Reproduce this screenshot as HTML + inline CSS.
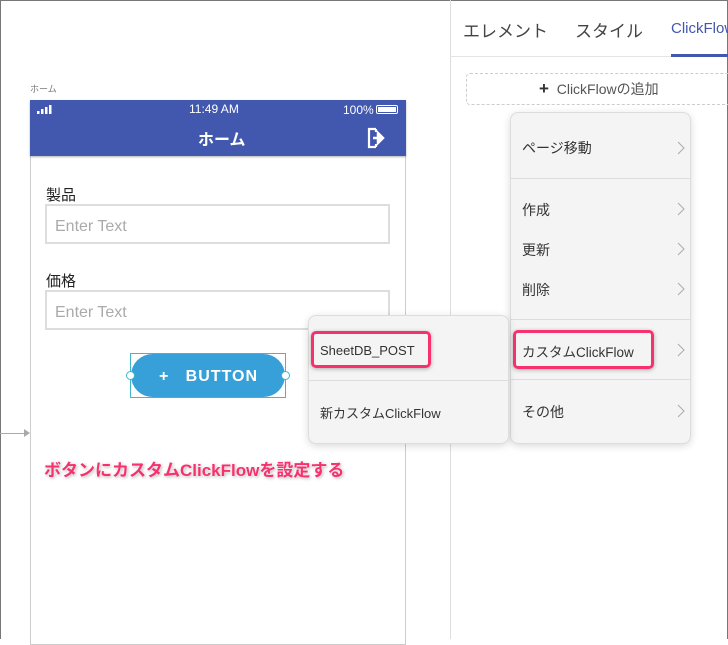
<!DOCTYPE html>
<html><head><meta charset="utf-8"><style>
*{box-sizing:border-box;margin:0;padding:0}
body{width:728px;height:639px;position:relative;overflow:hidden;background:#fff;font-family:"Liberation Sans","Noto Sans CJK JP",sans-serif;}
.a{position:absolute}
.t{position:absolute;white-space:nowrap}
.menu{position:absolute;background:#f4f4f4;border:1px solid #ddd;border-radius:8px;box-shadow:0 2px 8px rgba(0,0,0,.15)}
.sep{position:absolute;left:0;right:0;height:1px;background:#ddd}
.mi{position:absolute;font-size:14px;color:#333;white-space:nowrap}
.chev{position:absolute;width:8px;height:14px}
.pink{position:absolute;border:3px solid #f7306e;border-radius:5px;box-shadow:0 1px 4px rgba(0,0,0,.3)}
</style></head><body>
<div class="a" style="left:0;top:0;width:728px;height:639px;border:1px solid #777;border-bottom:none"></div>
<div class="a" style="left:450px;top:0;width:1px;height:639px;background:#ddd"></div>
<div class="a" style="left:450px;top:56px;width:278px;height:1px;background:#e4e4e4"></div>
<div class="t" style="left:463px;top:17px;font-size:17px;color:#444">エレメント</div>
<div class="t" style="left:575px;top:17px;font-size:17px;color:#444">スタイル</div>
<div class="t" style="left:671px;top:20px;font-size:15px;color:#4257ae">ClickFlow</div>
<div class="a" style="left:671px;top:54px;width:57px;height:3px;background:#4257ae"></div>
<div class="a" style="left:466px;top:73px;width:270px;height:32px;border:1px dashed #ccc;border-radius:4px"></div>
<div class="t" style="left:539px;top:79px;font-size:14px;color:#555"><b style="font-size:17px;color:#333">+</b>&nbsp; ClickFlowの追加</div>
<!-- phone -->
<div class="t" style="left:30px;top:82px;font-size:9px;color:#777">ホーム</div>
<div class="a" style="left:30px;top:100px;width:376px;height:545px;border:1px solid #ccc"></div>
<div class="a" style="left:30px;top:100px;width:376px;height:56px;background:#4257ae;box-shadow:0 1px 2px rgba(0,0,0,.3)"></div>
<svg class="a" style="left:37px;top:105px" width="16" height="9"><rect x="0" y="6" width="2.5" height="3" fill="#fff"/><rect x="4" y="4" width="2.5" height="5" fill="#fff"/><rect x="8" y="2" width="2.5" height="7" fill="#fff"/><rect x="12" y="0" width="2.5" height="9" fill="#fff"/></svg>
<div class="t" style="left:189px;top:102px;font-size:12px;color:#fff">11:49 AM</div>
<div class="t" style="left:343px;top:103px;font-size:12px;color:#fff">100%</div>
<div class="a" style="left:376px;top:105px;width:22px;height:9px;border:1px solid #fff;border-radius:2px;padding:1px"><div style="background:#fff;width:100%;height:100%"></div></div>
<div class="t" style="left:198px;top:126px;font-size:16px;color:#fff;font-weight:bold">ホーム</div>
<svg class="a" style="left:367px;top:127px" width="20" height="22" viewBox="0 0 20 22"><path d="M9 2H2v18h7M9 2v3M9 20v-3" stroke="#fff" stroke-width="2.2" fill="none"/><path d="M6 11h8M11 6l5 5-5 5z" stroke="#fff" stroke-width="2.5" fill="#fff"/></svg>
<div class="t" style="left:46px;top:184px;font-size:15px;color:#222">製品</div>
<div class="a" style="left:45px;top:204px;width:345px;height:40px;border:2px solid #ddd"></div>
<div class="t" style="left:55px;top:218px;font-size:16px;color:#aaa">Enter Text</div>
<div class="t" style="left:46px;top:270px;font-size:15px;color:#222">価格</div>
<div class="a" style="left:45px;top:290px;width:345px;height:40px;border:2px solid #ddd"></div>
<div class="t" style="left:55px;top:304px;font-size:16px;color:#aaa">Enter Text</div>
<div class="a" style="left:130px;top:353px;width:156px;height:45px;border:1px solid #3fb8c9"></div>
<div class="a" style="left:131px;top:354px;width:154px;height:43px;border-radius:22px;background:#37a0d9"></div>
<div class="t" style="left:159px;top:368px;font-size:16px;color:#fff;font-weight:bold;letter-spacing:1px">+&nbsp;&nbsp; BUTTON</div>
<div class="a" style="left:126px;top:371px;width:9px;height:9px;border-radius:50%;background:#fff;border:1px solid #3fb8c9"></div>
<div class="a" style="left:281px;top:371px;width:9px;height:9px;border-radius:50%;background:#fff;border:1px solid #3fb8c9"></div>
<div class="a" style="left:0;top:433px;width:28px;height:1px;background:#aaa"></div>
<div class="a" style="left:24px;top:429px;width:0;height:0;border-left:6px solid #aaa;border-top:4px solid transparent;border-bottom:4px solid transparent"></div>
<div class="t" style="left:44px;top:456px;font-size:17px;color:#f7306e;font-weight:bold;text-shadow:0 0 2px #fff,1px 1px 3px rgba(0,0,0,.35)">ボタンにカスタムClickFlowを設定する</div>
<!-- main menu -->
<div class="menu" style="left:510px;top:112px;width:181px;height:332px">
<div class="mi" style="left:11px;top:25px">ページ移動</div><svg class="chev" style="left:166px;top:28px"><path d="M1 1l6 6-6 6" stroke="#aaa" fill="none"/></svg>
<div class="sep" style="top:65px"></div>
<div class="mi" style="left:11px;top:87px">作成</div><svg class="chev" style="left:166px;top:89px"><path d="M1 1l6 6-6 6" stroke="#aaa" fill="none"/></svg>
<div class="mi" style="left:11px;top:127px">更新</div><svg class="chev" style="left:166px;top:129px"><path d="M1 1l6 6-6 6" stroke="#aaa" fill="none"/></svg>
<div class="mi" style="left:11px;top:167px">削除</div><svg class="chev" style="left:166px;top:169px"><path d="M1 1l6 6-6 6" stroke="#aaa" fill="none"/></svg>
<div class="sep" style="top:206px"></div>
<div class="mi" style="left:11px;top:228px;font-size:13.5px">カスタムClickFlow</div><svg class="chev" style="left:166px;top:230px"><path d="M1 1l6 6-6 6" stroke="#aaa" fill="none"/></svg>
<div class="sep" style="top:266px"></div>
<div class="mi" style="left:11px;top:289px">その他</div><svg class="chev" style="left:166px;top:291px"><path d="M1 1l6 6-6 6" stroke="#aaa" fill="none"/></svg>
</div>
<div class="menu" style="left:308px;top:315px;width:201px;height:129px">
<div class="mi" style="left:11px;top:27px;font-size:13px">SheetDB_POST</div>
<div class="sep" style="top:64px"></div>
<div class="mi" style="left:11px;top:87px;font-size:13px">新カスタムClickFlow</div>
</div>
<div class="pink" style="left:311px;top:331px;width:120px;height:37px"></div>
<div class="pink" style="left:513px;top:330px;width:141px;height:39px"></div>
</body></html>
